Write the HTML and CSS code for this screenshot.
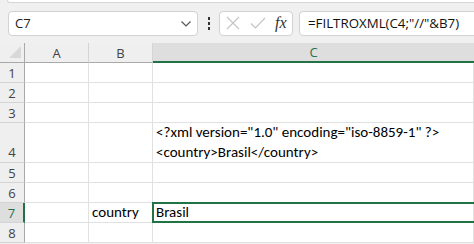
FILE: index.html
```html
<!DOCTYPE html>
<html>
<head>
<meta charset="utf-8">
<link rel="stylesheet" href="styles.css">
</head>
<body>
<div class="topbar"></div>
<div class="formula-row">
  <div class="namebox">
    <span class="ref">C7</span>
    <svg class="chev" width="12" height="8" viewBox="0 0 12 8"><path d="M1.5 1.5 L6 6 L10.5 1.5" fill="none" stroke="#555" stroke-width="1.2"/></svg>
  </div>
  <div class="dots"><span></span><span></span><span></span></div>
  <div class="fxbox">
    <svg width="14" height="14" viewBox="0 0 14 14"><path d="M1 1 L13 13 M13 1 L1 13" stroke="#c4c4c4" stroke-width="1.1" fill="none"/></svg>
    <svg width="16" height="14" viewBox="0 0 16 14"><path d="M1 7.5 L5.5 12 L15 2" stroke="#c4c4c4" stroke-width="1.1" fill="none"/></svg>
    <span class="fx">fx</span>
  </div>
  <div class="formula">=FILTROXML(C4;"//"&amp;B7)</div>
</div>
<div class="sheet">
  <div class="hd corner"><div class="tri"></div></div>
  <div class="hd col">A</div>
  <div class="hd col">B</div>
  <div class="hd col sel">C</div>

  <div class="hd row">1</div><div class="c"></div><div class="c"></div><div class="c"></div>
  <div class="hd row">2</div><div class="c"></div><div class="c"></div><div class="c"></div>
  <div class="hd row">3</div><div class="c"></div><div class="c"></div><div class="c"></div>
  <div class="hd row tall">4</div><div class="c"></div><div class="c"></div><div class="c multi">&lt;?xml version="1.0" encoding="iso-8859-1" ?&gt;<br>&lt;country&gt;Brasil&lt;/country&gt;</div>
  <div class="hd row">5</div><div class="c"></div><div class="c"></div><div class="c"></div>
  <div class="hd row">6</div><div class="c"></div><div class="c"></div><div class="c"></div>
  <div class="hd row rsel">7</div><div class="c"></div><div class="c">country</div><div class="c active">Brasil</div>
  <div class="hd row">8</div><div class="c"></div><div class="c"></div><div class="c"></div>
</div>
</body>
</html>
```
FILE: styles.css
```css
html, body {
  margin: 0;
  padding: 0;
}
body {
  width: 474px;
  height: 244px;
  overflow: hidden;
  background: #f0f0f0;
  font-family: "Segoe UI", "Open Sans", "Noto Sans", sans-serif;
}
.topbar {
  margin-left: 7px;
  height: 2px;
  background: #fff;
  border: 1px solid #d6d6d6;
  border-top: none;
  border-radius: 0 0 5px 5px;
  margin-right: -10px;
}
.formula-row {
  display: flex;
  align-items: center;
  padding: 8px 0 0 8px;
  height: 24px;
}
.namebox {
  box-sizing: border-box;
  width: 190px;
  height: 25px;
  background: #fff;
  border: 1px solid #d2d2d2;
  border-radius: 4px;
  display: flex;
  align-items: center;
  justify-content: space-between;
  padding: 0 5px 0 6px;
}
.ref {
  font-size: 13px;
  color: #222;
}
.chev { margin-top: 1px; }
.dots {
  width: 21px;
  display: flex;
  flex-direction: column;
  align-items: center;
  gap: 2px;
}
.dots span {
  width: 2px;
  height: 3px;
  background: #333;
}
.fxbox {
  box-sizing: border-box;
  width: 74px;
  height: 25px;
  background: #fff;
  border: 1px solid #d2d2d2;
  border-radius: 4px;
  display: flex;
  align-items: center;
  padding-left: 6px;
  gap: 10px;
}
.fx {
  font-family: "Liberation Serif", "DejaVu Serif", serif;
  font-style: italic;
  font-size: 16px;
  color: #333;
  margin-left: -1px;
}
.formula {
  box-sizing: border-box;
  margin-left: 6px;
  flex: 1;
  margin-right: -20px;
  height: 25px;
  background: #fff;
  border: 1px solid #d2d2d2;
  border-radius: 4px;
  padding-left: 8px;
  font-size: 13.3px;
  line-height: 23px;
  color: #111;
}
.sheet {
  margin-top: 8px;
  display: grid;
  grid-template-columns: 25px 64px 64px 1fr;
  grid-template-rows: 20px 20px 20px 20px 40px 20px 20px 20px 20px;
}
.hd {
  box-sizing: border-box;
  background: #efefef;
  color: #444;
  font-size: 13px;
  display: flex;
  align-items: center;
  justify-content: center;
}
.corner {
  position: relative;
  border-right: 1px solid #a9a9a9;
  border-bottom: 1px solid #a9a9a9;
}
.tri {
  position: absolute;
  right: 3px;
  bottom: 4px;
  width: 0;
  height: 0;
  border-left: 12px solid transparent;
  border-bottom: 12px solid #d8d8d8;
}
.col {
  border-right: 1px solid #d4d4d4;
  border-bottom: 1px solid #a9a9a9;
}
.col.sel {
  background: #dedede;
  color: #217346;
  border-bottom: 2px solid #217346;
  border-right: none;
}
.row {
  border-right: 1px solid #a9a9a9;
  border-bottom: 1px solid #d4d4d4;
}
.row.tall {
  align-items: flex-end;
  padding-bottom: 1px;
}
.row.rsel {
  background: #dedede;
  color: #217346;
  border-right: 2px solid #217346;
}
.c {
  box-sizing: border-box;
  background: #fff;
  border-right: 1px solid #e1e1e1;
  border-bottom: 1px solid #e1e1e1;
  font-family: "Carlito", "Lato", sans-serif;
  font-size: 15px;
  color: #000;
  padding: 0 3px;
  line-height: 19px;
  white-space: nowrap;
  position: relative;
}
.c.multi {
  line-height: 20px;
  display: flex;
  flex-direction: column;
  justify-content: flex-end;
}
.c.active::after {
  content: "";
  position: absolute;
  left: -1px;
  top: -1px;
  right: -10px;
  bottom: -1px;
  border: 2px solid #217346;
}
```
